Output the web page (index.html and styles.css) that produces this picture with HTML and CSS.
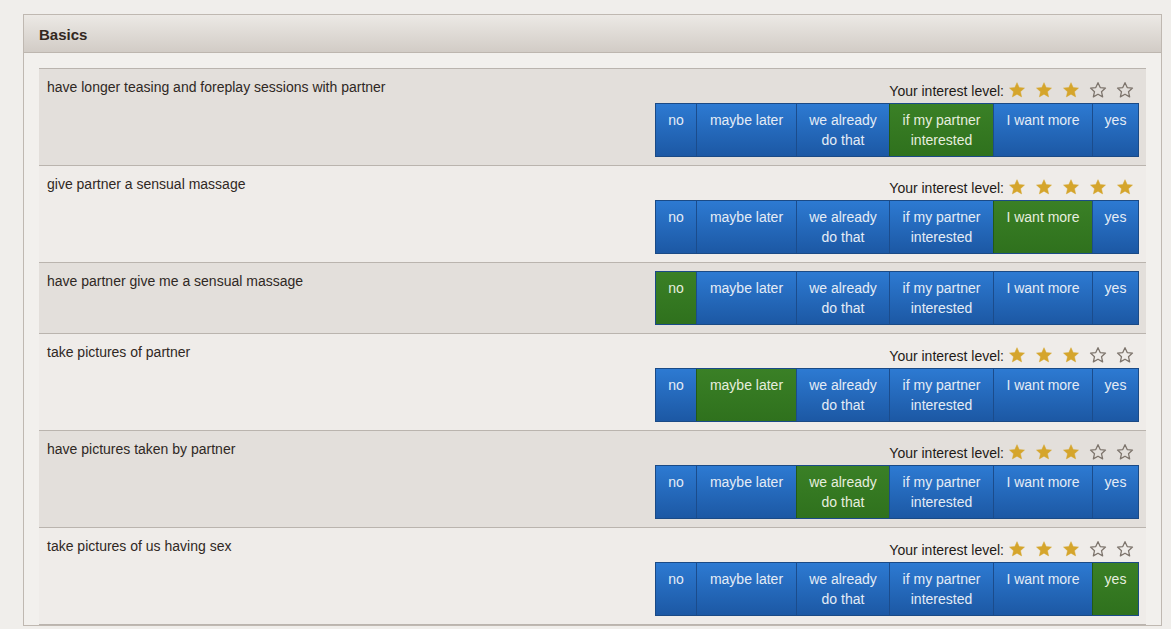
FILE: index.html
```html
<!DOCTYPE html>
<html lang="en">
<head>
  <meta charset="UTF-8" />
  <title>Basics - Interests</title>
  <link rel="stylesheet" href="styles.css">
</head>
<body>

  <svg class="defs" width="0" height="0">
    <symbol id="star" viewBox="0 0 24 24">
      <path d="M12 2.2l2.95 6.55 7.05.7-5.35 4.75 1.55 7L12 17.6l-6.2 3.6 1.55-7L2 9.45l7.05-.7z" />
    </symbol>
  </svg>

  <div class="panel">
    <div class="panel-heading">Basics</div>
    <div class="panel-body">

      <!-- row 1 -->
      <div class="item odd">
        <div class="item-name">have longer teasing and foreplay sessions with partner</div>
        <div class="item-answer">
          <div class="interest">
            Your interest level:
            <span class="stars">
              <svg class="star on"><use href="#star"/></svg>
              <svg class="star on"><use href="#star"/></svg>
              <svg class="star on"><use href="#star"/></svg>
              <svg class="star"><use href="#star"/></svg>
              <svg class="star"><use href="#star"/></svg>
            </span>
          </div>
          <div class="choices">
            <div class="choice c-no">no</div>
            <div class="choice c-later">maybe later</div>
            <div class="choice c-already">we already<br>do that</div>
            <div class="choice c-partner active">if my partner<br>interested</div>
            <div class="choice c-more">I want more</div>
            <div class="choice c-yes">yes</div>
          </div>
        </div>
      </div>

      <!-- row 2 -->
      <div class="item">
        <div class="item-name">give partner a sensual massage</div>
        <div class="item-answer">
          <div class="interest">
            Your interest level:
            <span class="stars">
              <svg class="star on"><use href="#star"/></svg>
              <svg class="star on"><use href="#star"/></svg>
              <svg class="star on"><use href="#star"/></svg>
              <svg class="star on"><use href="#star"/></svg>
              <svg class="star on"><use href="#star"/></svg>
            </span>
          </div>
          <div class="choices">
            <div class="choice c-no">no</div>
            <div class="choice c-later">maybe later</div>
            <div class="choice c-already">we already<br>do that</div>
            <div class="choice c-partner">if my partner<br>interested</div>
            <div class="choice c-more active">I want more</div>
            <div class="choice c-yes">yes</div>
          </div>
        </div>
      </div>

      <!-- row 3 -->
      <div class="item odd">
        <div class="item-name">have partner give me a sensual massage</div>
        <div class="item-answer">
          <div class="choices">
            <div class="choice c-no active">no</div>
            <div class="choice c-later">maybe later</div>
            <div class="choice c-already">we already<br>do that</div>
            <div class="choice c-partner">if my partner<br>interested</div>
            <div class="choice c-more">I want more</div>
            <div class="choice c-yes">yes</div>
          </div>
        </div>
      </div>

      <!-- row 4 -->
      <div class="item">
        <div class="item-name">take pictures of partner</div>
        <div class="item-answer">
          <div class="interest">
            Your interest level:
            <span class="stars">
              <svg class="star on"><use href="#star"/></svg>
              <svg class="star on"><use href="#star"/></svg>
              <svg class="star on"><use href="#star"/></svg>
              <svg class="star"><use href="#star"/></svg>
              <svg class="star"><use href="#star"/></svg>
            </span>
          </div>
          <div class="choices">
            <div class="choice c-no">no</div>
            <div class="choice c-later active">maybe later</div>
            <div class="choice c-already">we already<br>do that</div>
            <div class="choice c-partner">if my partner<br>interested</div>
            <div class="choice c-more">I want more</div>
            <div class="choice c-yes">yes</div>
          </div>
        </div>
      </div>

      <!-- row 5 -->
      <div class="item odd">
        <div class="item-name">have pictures taken by partner</div>
        <div class="item-answer">
          <div class="interest">
            Your interest level:
            <span class="stars">
              <svg class="star on"><use href="#star"/></svg>
              <svg class="star on"><use href="#star"/></svg>
              <svg class="star on"><use href="#star"/></svg>
              <svg class="star"><use href="#star"/></svg>
              <svg class="star"><use href="#star"/></svg>
            </span>
          </div>
          <div class="choices">
            <div class="choice c-no">no</div>
            <div class="choice c-later">maybe later</div>
            <div class="choice c-already active">we already<br>do that</div>
            <div class="choice c-partner">if my partner<br>interested</div>
            <div class="choice c-more">I want more</div>
            <div class="choice c-yes">yes</div>
          </div>
        </div>
      </div>

      <!-- row 6 -->
      <div class="item">
        <div class="item-name">take pictures of us having sex</div>
        <div class="item-answer">
          <div class="interest">
            Your interest level:
            <span class="stars">
              <svg class="star on"><use href="#star"/></svg>
              <svg class="star on"><use href="#star"/></svg>
              <svg class="star on"><use href="#star"/></svg>
              <svg class="star"><use href="#star"/></svg>
              <svg class="star"><use href="#star"/></svg>
            </span>
          </div>
          <div class="choices">
            <div class="choice c-no">no</div>
            <div class="choice c-later">maybe later</div>
            <div class="choice c-already">we already<br>do that</div>
            <div class="choice c-partner">if my partner<br>interested</div>
            <div class="choice c-more">I want more</div>
            <div class="choice c-yes active">yes</div>
          </div>
        </div>
      </div>

    </div>
  </div>

</body>
</html>
```

FILE: styles.css
```css
body {
  margin: 0;
  padding: 14px 9px 0 23px;
  font-family: "Liberation Sans", Arial, sans-serif;
  font-size: 14px;
  color: #2f2824;
  background-color: #f0eeeb;
}

.defs {
  position: absolute;
}

.panel {
  border: 1px solid #bfb8b1;
  background-color: #f2f0ed;
}

.panel-heading {
  height: 37px;
  line-height: 39px;
  padding: 0 15px;
  font-size: 15px;
  font-weight: bold;
  color: #33281f;
  background: linear-gradient(#ece9e5, #d2ccc6);
  border-bottom: 1px solid #bdb6af;
}

.panel-body {
  padding: 15px 15px 0 15px;
}

.item {
  display: flex;
  justify-content: space-between;
  align-items: flex-start;
  border-top: 1px solid #bab4ae;
  padding: 8px 7px 8px 8px;
  background-color: #efece9;
}

.item:last-child {
  border-bottom: 1px solid #bab4ae;
}

.item.odd {
  background-color: #e3dfdb;
}

.item-name {
  line-height: 20px;
}

.item-answer {
  display: flex;
  flex-direction: column;
  align-items: flex-end;
}

.interest {
  display: flex;
  align-items: center;
  box-sizing: border-box;
  height: 26px;
  padding: 1px 5px 0 0;
  font-size: 14px;
  color: #1e1a17;
}

.stars {
  display: flex;
  gap: 9px;
  margin-left: 4px;
  margin-top: -1px;
}

.star {
  width: 18px;
  height: 18px;
  fill: none;
  stroke: #7d746c;
  stroke-width: 1.7;
  stroke-linejoin: round;
}

.star.on {
  fill: #d5a52c;
  stroke: #d5a52c;
  stroke-width: 0.6;
}

.choices {
  display: flex;
  border: 1px solid #1a4a86;
}

.choice {
  height: 52px;
  box-sizing: border-box;
  padding: 6px 0 0 0;
  line-height: 20px;
  font-size: 14px;
  text-align: center;
  color: #e4ecf6;
  background: linear-gradient(#2d7ad2, #1c58a4);
  border-left: 1px solid #1b4c8c;
}

.choice:first-child {
  border-left: none;
}

.choice.active {
  color: #e6eedf;
  background: linear-gradient(#3a8026, #2f711d);
  border-left-color: #235a15;
}

.c-no { width: 40px; }
.c-later { width: 100px; }
.c-already { width: 93px; }
.c-partner { width: 104px; }
.c-more { width: 99px; }
.c-yes { width: 46px; }
```
